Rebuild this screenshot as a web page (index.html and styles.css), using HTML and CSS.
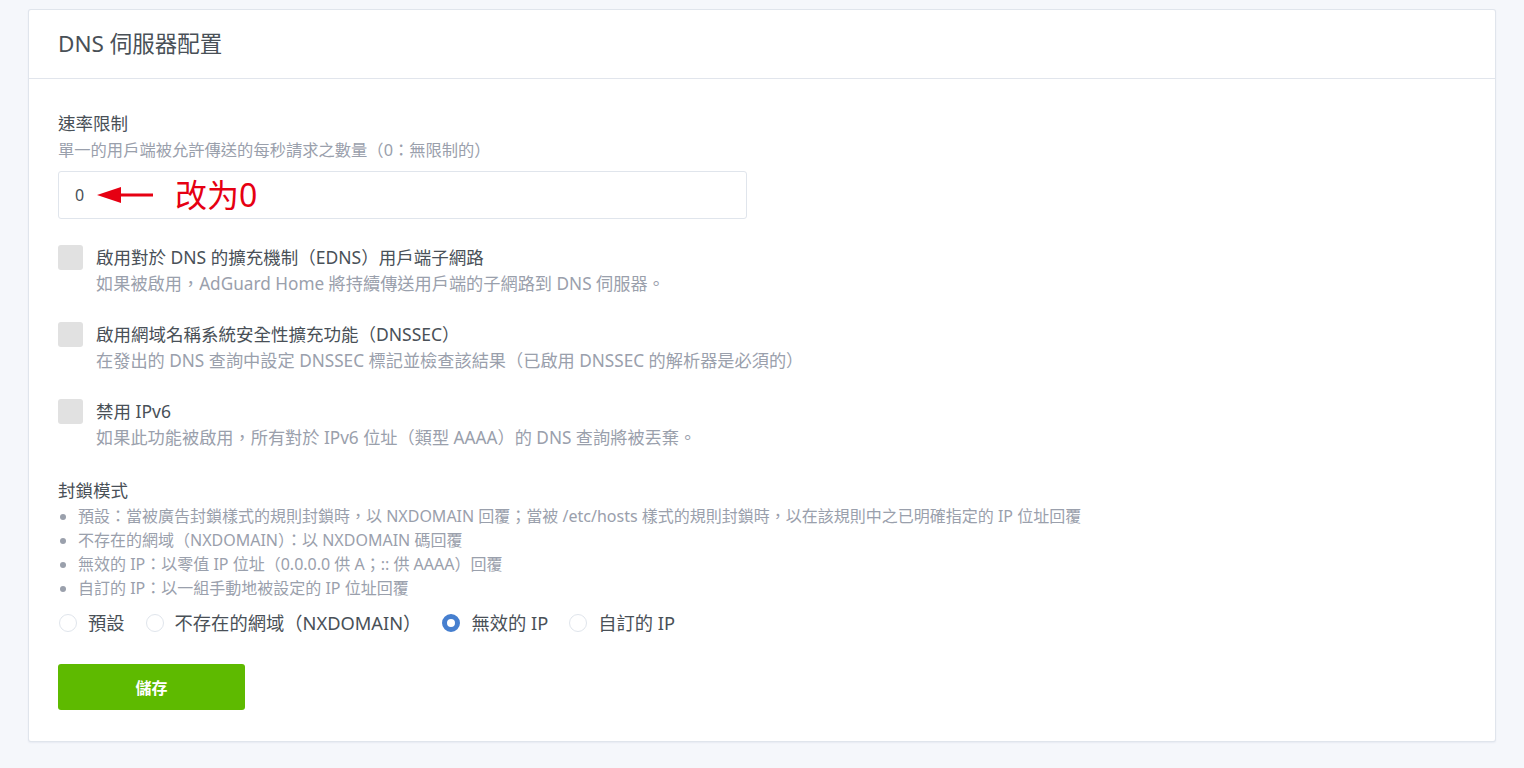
FILE: index.html
```html
<!DOCTYPE html>
<html lang="zh-Hant">
<head>
<meta charset="utf-8">
<title>DNS 伺服器配置</title>
<link rel="stylesheet" href="styles.css">
</head>
<body>
<div class="page">
  <div class="card">
    <div class="card-header">
      <h3 class="card-title">DNS 伺服器配置</h3>
    </div>
    <div class="card-body">
      <div class="field">
        <div class="field-label">速率限制</div>
        <div class="field-desc">單一的用戶端被允許傳送的每秒請求之數量（0：無限制的）</div>
        <div class="input-wrap">
          <input class="input" type="text" value="0">
          <div class="annot">
            <svg class="annot-arrow" width="56" height="18" viewBox="0 0 56 18">
              <polygon points="0,9 24,1 24,17" fill="#e60012"/>
              <rect x="22" y="7.5" width="34" height="3" fill="#e60012"/>
            </svg>
            <span class="annot-text">改为0</span>
          </div>
        </div>
      </div>

      <div class="check-row first">
        <span class="checkbox"></span>
        <div class="check-text">
          <div class="check-label">啟用對於 DNS 的擴充機制（EDNS）用戶端子網路</div>
          <div class="check-desc">如果被啟用，AdGuard Home 將持續傳送用戶端的子網路到 DNS 伺服器。</div>
        </div>
      </div>
      <div class="check-row">
        <span class="checkbox"></span>
        <div class="check-text">
          <div class="check-label">啟用網域名稱系統安全性擴充功能（DNSSEC）</div>
          <div class="check-desc">在發出的 DNS 查詢中設定 DNSSEC 標記並檢查該結果（已啟用 DNSSEC 的解析器是必須的）</div>
        </div>
      </div>
      <div class="check-row">
        <span class="checkbox"></span>
        <div class="check-text">
          <div class="check-label">禁用 IPv6</div>
          <div class="check-desc">如果此功能被啟用，所有對於 IPv6 位址（類型 AAAA）的 DNS 查詢將被丟棄。</div>
        </div>
      </div>

      <div class="mode">
        <div class="field-label">封鎖模式</div>
        <ul class="mode-list">
          <li>預設：當被廣告封鎖樣式的規則封鎖時，以 NXDOMAIN 回覆；當被 /etc/hosts 樣式的規則封鎖時，以在該規則中之已明確指定的 IP 位址回覆</li>
          <li>不存在的網域（NXDOMAIN）：以 NXDOMAIN 碼回覆</li>
          <li>無效的 IP：以零值 IP 位址（0.0.0.0 供 A；:: 供 AAAA）回覆</li>
          <li>自訂的 IP：以一組手動地被設定的 IP 位址回覆</li>
        </ul>
        <div class="radios">
          <label class="radio"><span class="radio-dot"></span>預設</label>
          <label class="radio"><span class="radio-dot"></span>不存在的網域（NXDOMAIN）</label>
          <label class="radio"><span class="radio-dot checked"></span>無效的 IP</label>
          <label class="radio"><span class="radio-dot"></span>自訂的 IP</label>
        </div>
      </div>

      <button class="btn-save" type="button">儲存</button>
    </div>
  </div>
</div>
</body>
</html>
```

FILE: styles.css
```css
* { box-sizing: border-box; }
html, body {
  margin: 0;
  padding: 0;
  background: #f5f7fb;
  font-family: "Noto Sans", "Noto Sans CJK TC", sans-serif;
  color: #495057;
}
.page {
  padding: 9px 28px 26px 28px;
}
.card {
  background: #fff;
  border: 1px solid rgba(0, 40, 100, 0.12);
  border-radius: 3px;
  box-shadow: 0 1px 2px rgba(0, 40, 100, 0.06);
}
.card-header {
  height: 69px;
  display: flex;
  align-items: center;
  padding: 0 29px;
  border-bottom: 1px solid #e1e5ec;
}
.card-title {
  margin: 0;
  font-size: 22.5px;
  font-weight: 400;
  line-height: 30px;
  color: #495057;
}
.card-body {
  padding: 32px 29px 31px 29px;
}
.field-label {
  font-size: 17.5px;
  line-height: 24px;
  color: #495057;
}
.field-desc {
  font-size: 16.3px;
  line-height: 22px;
  margin-top: 4px;
  color: #9aa0ac;
}
.input-wrap {
  position: relative;
  width: 689px;
  margin-top: 10px;
}
.input {
  display: block;
  width: 100%;
  height: 48px;
  border: 1px solid #e0e5ec;
  border-radius: 3px;
  padding: 0 16px;
  font-family: "Noto Sans", "Noto Sans CJK TC", sans-serif;
  font-size: 16px;
  color: #495057;
  background: #fff;
  outline: none;
}
.annot {
  position: absolute;
  left: 39px;
  top: 5px;
  display: flex;
  align-items: center;
  gap: 22px;
  pointer-events: none;
}
.annot-arrow { display: block; }
.annot-text {
  color: #e60012;
  font-size: 32px;
  line-height: 38px;
}
.check-row {
  display: flex;
  gap: 13px;
  margin-top: 27px;
}
.check-row.first { margin-top: 26px; }
.checkbox {
  flex: none;
  width: 25px;
  height: 25px;
  border-radius: 3px;
  background: #e1e1e1;
}
.check-label {
  font-size: 17.5px;
  line-height: 24px;
  color: #495057;
}
.check-desc {
  font-size: 17.2px;
  line-height: 22px;
  margin-top: 4px;
  color: #9aa0ac;
}
.mode {
  margin-top: 29px;
}
.mode-list {
  margin: 2px 0 0 0;
  padding-left: 20px;
  font-size: 16px;
  line-height: 24px;
  color: #9aa0ac;
}
.mode-list li::marker { color: #9aa0ac; }
.radios {
  display: flex;
  align-items: center;
  margin-top: 11px;
  height: 24px;
}
.radio {
  display: flex;
  align-items: center;
  gap: 11px;
  font-size: 18.3px;
  line-height: 24px;
  color: #495057;
  margin-right: 21px;
}
.radio:first-child { margin-left: 1px; }
.radio-dot {
  width: 18px;
  height: 18px;
  border-radius: 50%;
  border: 1px solid #e0e5ec;
  background: #fff;
  flex: none;
}
.radio-dot.checked {
  border: 5px solid #467fcf;
  background: #fff;
}
.btn-save {
  display: block;
  margin-top: 29px;
  width: 187px;
  height: 46px;
  border: none;
  border-radius: 3px;
  background: #5eba00;
  color: #fff;
  font-family: "Noto Sans", "Noto Sans CJK TC", sans-serif;
  font-size: 16px;
  font-weight: 700;
}
```
